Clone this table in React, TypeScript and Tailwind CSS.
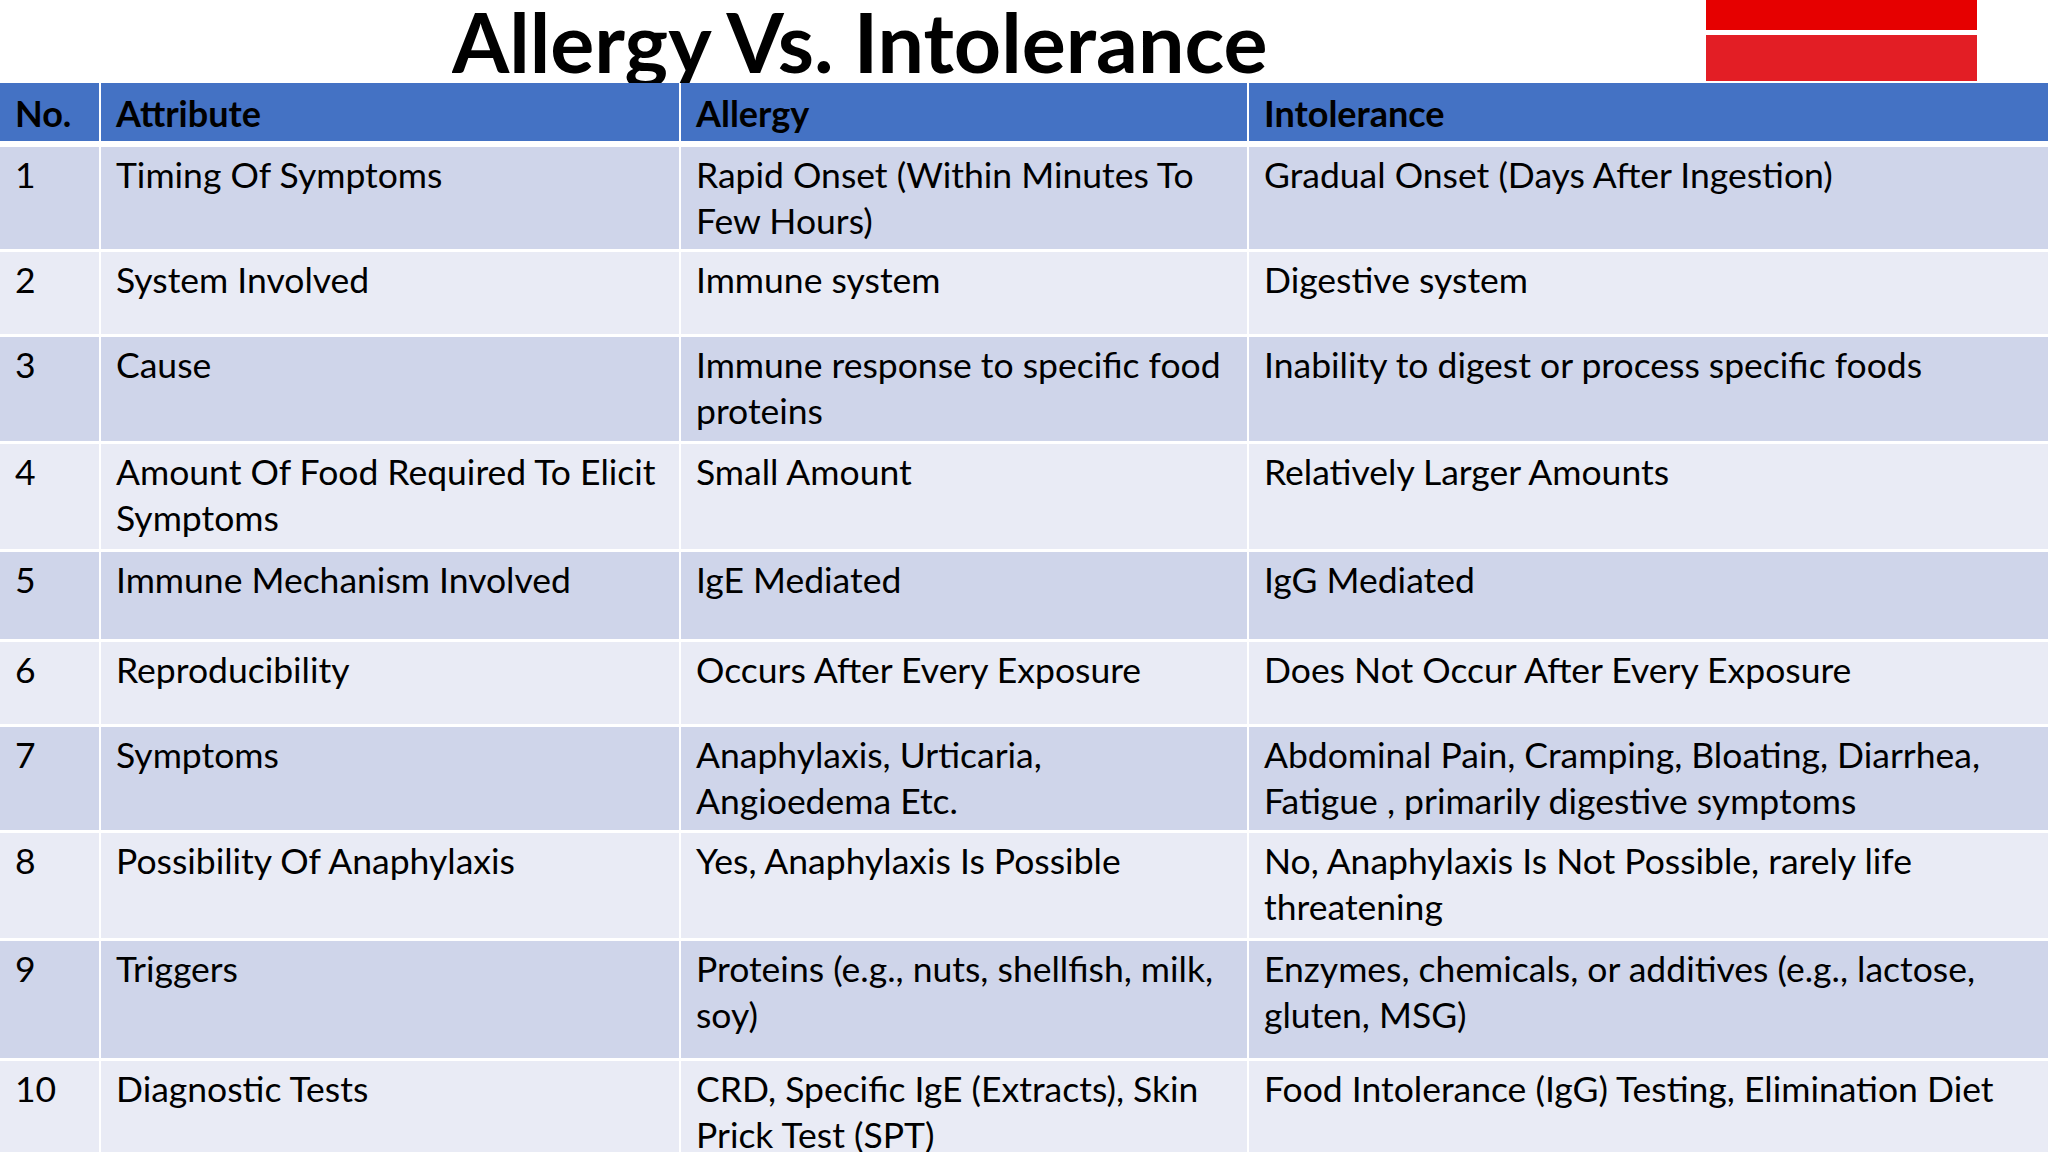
import React from "react";

type Row = {
  no: string;
  attr: string[];
  allergy: string[];
  intolerance: string[];
  h: string;
  bg: string;
};

const rows: Row[] = [
  {
    no: "1",
    attr: ["Timing Of Symptoms"],
    allergy: ["Rapid Onset (Within Minutes To", "Few Hours)"],
    intolerance: ["Gradual Onset (Days After Ingestion)"],
    h: "h-[102px]",
    bg: "bg-[#cfd5ea]",
  },
  {
    no: "2",
    attr: ["System Involved"],
    allergy: ["Immune system"],
    intolerance: ["Digestive system"],
    h: "h-[82px]",
    bg: "bg-[#e9ebf5]",
  },
  {
    no: "3",
    attr: ["Cause"],
    allergy: ["Immune response to specific food", "proteins"],
    intolerance: ["Inability to digest or process specific foods"],
    h: "h-[104px]",
    bg: "bg-[#cfd5ea]",
  },
  {
    no: "4",
    attr: ["Amount Of Food Required To Elicit", "Symptoms"],
    allergy: ["Small Amount"],
    intolerance: ["Relatively Larger Amounts"],
    h: "h-[105px]",
    bg: "bg-[#e9ebf5]",
  },
  {
    no: "5",
    attr: ["Immune Mechanism Involved"],
    allergy: ["IgE Mediated"],
    intolerance: ["IgG Mediated"],
    h: "h-[87px]",
    bg: "bg-[#cfd5ea]",
  },
  {
    no: "6",
    attr: ["Reproducibility"],
    allergy: ["Occurs After Every Exposure"],
    intolerance: ["Does Not Occur After Every Exposure"],
    h: "h-[82px]",
    bg: "bg-[#e9ebf5]",
  },
  {
    no: "7",
    attr: ["Symptoms"],
    allergy: ["Anaphylaxis, Urticaria,", "Angioedema Etc."],
    intolerance: [
      "Abdominal Pain, Cramping, Bloating, Diarrhea,",
      "Fatigue , primarily digestive symptoms",
    ],
    h: "h-[103px]",
    bg: "bg-[#cfd5ea]",
  },
  {
    no: "8",
    attr: ["Possibility Of Anaphylaxis"],
    allergy: ["Yes, Anaphylaxis Is Possible"],
    intolerance: ["No, Anaphylaxis Is Not Possible, rarely life", "threatening"],
    h: "h-[105px]",
    bg: "bg-[#e9ebf5]",
  },
  {
    no: "9",
    attr: ["Triggers"],
    allergy: ["Proteins (e.g., nuts, shellfish, milk,", "soy)"],
    intolerance: ["Enzymes, chemicals, or additives (e.g., lactose,", "gluten, MSG)"],
    h: "h-[117px]",
    bg: "bg-[#cfd5ea]",
  },
  {
    no: "10",
    attr: ["Diagnostic Tests"],
    allergy: ["CRD, Specific IgE (Extracts), Skin", "Prick Test (SPT)"],
    intolerance: ["Food Intolerance (IgG) Testing, Elimination Diet"],
    h: "h-[110px]",
    bg: "bg-[#e9ebf5]",
  },
];

const Lines = ({ lines }: { lines: string[] }) => (
  <>
    {lines.map((l, i) => (
      <div key={i} className="whitespace-nowrap">
        {l}
      </div>
    ))}
  </>
);

const cell = "pl-[15px] pt-[5px] text-[35.5px] leading-[46px] text-black";
const head = "pl-[15px] pt-[7px] text-[36px] leading-[46px] font-bold text-black bg-[#4472c4]";

export default function App() {
  return (
    <div className="w-[2048px] h-[1152px] overflow-hidden bg-white font-['Lato','Open_Sans',sans-serif]">
      <div className="flex h-[83px]">
        <div className="ml-[452px] h-[83px] overflow-hidden">
          <h1 className="pt-[1px] text-[82.5px] leading-none font-bold text-black whitespace-nowrap">
            Allergy Vs. Intolerance
          </h1>
        </div>
        <div className="ml-auto mr-[71px] w-[271px] flex flex-col">
          <div className="h-[30px] bg-[#e60000]" />
          <div className="mt-[5px] h-[46px] bg-[#e31e25]" />
        </div>
      </div>

      <div className="grid grid-cols-[99px_578px_566px_1fr] gap-x-[2px] h-[58px]">
        <div className={head}>No.</div>
        <div className={head}>Attribute</div>
        <div className={head}>Allergy</div>
        <div className={head}>Intolerance</div>
      </div>

      <div className="mt-[6px] flex flex-col gap-y-[3px]">
        {rows.map((r) => (
          <div
            key={r.no}
            className={`grid grid-cols-[99px_578px_566px_1fr] gap-x-[2px] ${r.h}`}
          >
            <div className={`${cell} ${r.bg}`}>{r.no}</div>
            <div className={`${cell} ${r.bg}`}>
              <Lines lines={r.attr} />
            </div>
            <div className={`${cell} ${r.bg}`}>
              <Lines lines={r.allergy} />
            </div>
            <div className={`${cell} ${r.bg}`}>
              <Lines lines={r.intolerance} />
            </div>
          </div>
        ))}
      </div>
    </div>
  );
}
